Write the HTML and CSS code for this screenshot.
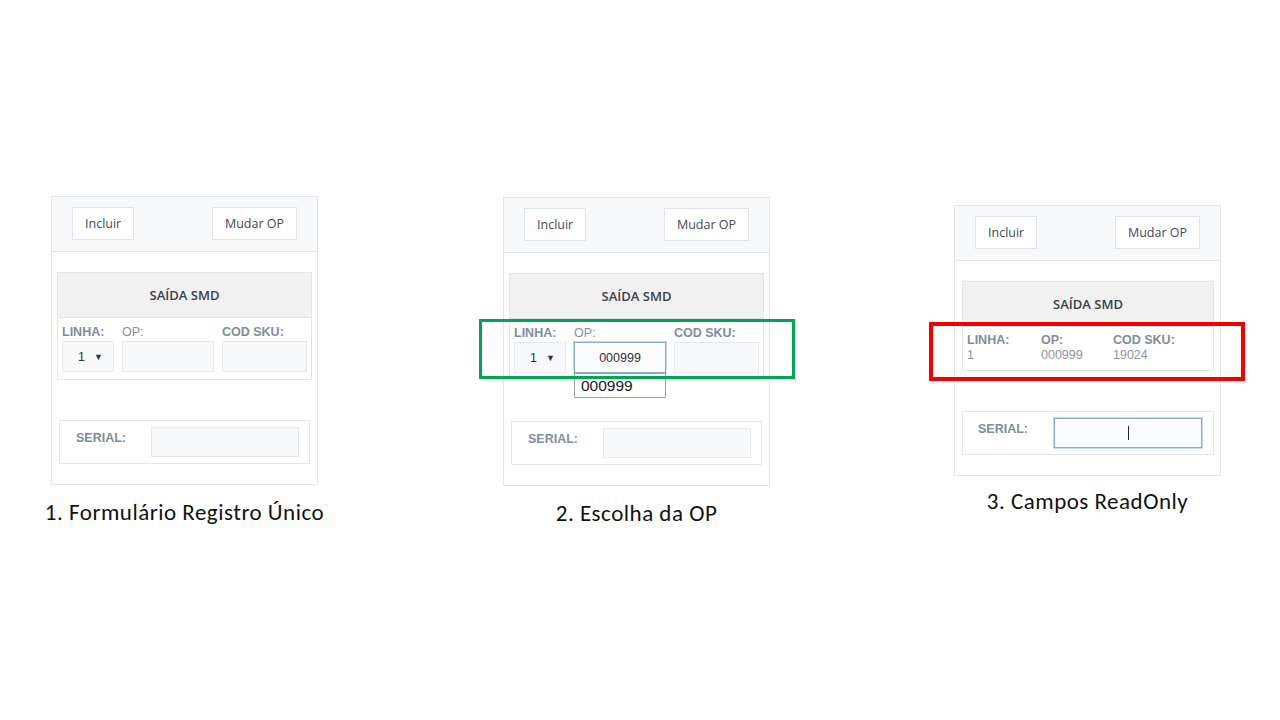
FILE: index.html
```html
<!DOCTYPE html>
<html lang="pt-BR">
<head>
<meta charset="utf-8">
<title>Registro Único</title>
<link rel="stylesheet" href="styles.css">
</head>
<body>
<div class="slide">

  <figure class="fig fig1">
    <div class="panel">
      <div class="toolbar"><button class="btn">Incluir</button><button class="btn">Mudar OP</button></div>
      <section class="card">
        <div class="card-title">SAÍDA SMD</div>
        <div class="fields">
          <div class="field"><span class="lbl">LINHA:</span><div class="select"><span>1</span><span class="caret">▼</span></div></div>
          <div class="field"><span class="lbl light">OP:</span><input class="inp" type="text"></div>
          <div class="field"><span class="lbl">COD SKU:</span><input class="inp" type="text"></div>
        </div>
      </section>
      <div class="serial"><span class="lbl serial-lbl">SERIAL:</span><input class="inp serial-inp" type="text"></div>
    </div>
    <figcaption class="caption">1. Formulário Registro Único</figcaption>
  </figure>

  <figure class="fig fig2">
    <div class="panel">
      <div class="toolbar"><button class="btn">Incluir</button><button class="btn">Mudar OP</button></div>
      <section class="card">
        <div class="card-title">SAÍDA SMD</div>
        <div class="fields">
          <div class="field"><span class="lbl">LINHA:</span><div class="select"><span>1</span><span class="caret">▼</span></div></div>
          <div class="field"><span class="lbl light">OP:</span><input class="inp inp-focus" type="text" value="000999">
            <div class="suggest">000999</div>
          </div>
          <div class="field"><span class="lbl">COD SKU:</span><input class="inp" type="text"></div>
        </div>
      </section>
      <div class="serial"><span class="lbl serial-lbl">SERIAL:</span><input class="inp serial-inp" type="text"></div>
    </div>
    <figcaption class="caption">2. Escolha da OP</figcaption>
  </figure>

  <figure class="fig fig3">
    <div class="panel">
      <div class="toolbar"><button class="btn">Incluir</button><button class="btn">Mudar OP</button></div>
      <section class="card card-ro">
        <div class="card-title">SAÍDA SMD</div>
        <div class="ro">
          <div><div class="lbl">LINHA:</div><div class="ro-val">1</div></div>
          <div><div class="lbl">OP:</div><div class="ro-val">000999</div></div>
          <div><div class="lbl">COD SKU:</div><div class="ro-val">19024</div></div>
        </div>
      </section>
      <div class="serial serial-ro"><span class="lbl serial-lbl">SERIAL:</span><div class="inp serial-inp inp-focus caret-box"><span class="cursor"></span></div></div>
    </div>
    <figcaption class="caption caption3">3. Campos ReadOnly</figcaption>
  </figure>

  <div class="mark mark-green"></div>
  <div class="mark mark-red"></div>
</div>
</body>
</html>
```

FILE: styles.css
```css
html, body {
  margin: 0;
  padding: 0;
  background: #ffffff;
}

.slide {
  position: relative;
  width: 1280px;
  height: 720px;
  overflow: hidden;
  background: #ffffff;
  font-family: "Open Sans", "Liberation Sans", sans-serif;
}

.fig {
  position: absolute;
  margin: 0;
  width: 267px;
  display: flex;
  flex-direction: column;
  align-items: center;
}

.fig1 { left: 51px; top: 196px; }
.fig2 { left: 503px; top: 197px; }
.fig3 { left: 954px; top: 205px; }

.panel {
  width: 267px;
  flex-shrink: 0;
  box-sizing: border-box;
  border: 1px solid #e1e5ea;
  background: #ffffff;
}

.toolbar {
  height: 44px;
  padding: 10px 20px 0;
  display: flex;
  justify-content: space-between;
  align-items: flex-start;
  background: #f7f9fb;
  border-bottom: 1px solid #e1e5ea;
}

.btn {
  height: 33px;
  padding: 0 12px;
  margin: 0;
  border: 1px solid #e1e5ea;
  border-radius: 0;
  background: #ffffff;
  font-family: "Open Sans", sans-serif;
  font-size: 12.5px;
  color: #444a52;
}

.card {
  margin: 20px 5px 0;
  border: 1px solid #e5e5e5;
}

.card-title {
  height: 44px;
  display: flex;
  align-items: center;
  justify-content: center;
  background: #f1f1f1;
  border-bottom: 1px solid #e5e5e5;
  font-family: "Open Sans", sans-serif;
  font-weight: 600;
  font-size: 13px;
  color: #3b4048;
}

.fields {
  display: grid;
  grid-template-columns: 52px 92px 85px;
  column-gap: 8px;
  padding: 6px 4px 7px;
}

.field {
  position: relative;
  display: flex;
  flex-direction: column;
  gap: 1px;
}

.lbl {
  font-family: "Liberation Sans", Arial, sans-serif;
  font-weight: bold;
  font-size: 12.5px;
  line-height: 16px;
  color: #808d9a;
  white-space: nowrap;
}

.lbl.light {
  font-weight: normal;
  color: #85919e;
}

.inp {
  display: block;
  box-sizing: border-box;
  width: 100%;
  height: 31px;
  margin: 0;
  padding: 0;
  border: 1px solid #e4e7eb;
  border-radius: 0;
  background: #f8f9fb;
  outline: none;
  font-family: "Liberation Sans", Arial, sans-serif;
  font-size: 12.5px;
  color: #333333;
  text-align: center;
}

.inp-focus {
  border-color: #86aad8;
  background: #fbfcfe;
  box-shadow: 0 0 0 1px rgba(134, 170, 216, 0.45);
}

.select {
  box-sizing: border-box;
  height: 31px;
  display: flex;
  align-items: center;
  justify-content: space-between;
  padding: 0 10px 0 15px;
  border: 1px solid #e4e7eb;
  background: #f8f9fb;
  font-family: "Liberation Sans", Arial, sans-serif;
  font-size: 12.5px;
  color: #333333;
}

.caret {
  font-size: 9px;
  color: #333333;
}

.suggest {
  position: absolute;
  left: 0;
  top: 100%;
  width: 92px;
  height: 25px;
  box-sizing: border-box;
  border: 1px solid #a3a3a3;
  background: #ffffff;
  padding-left: 6px;
  font-family: "Liberation Sans", Arial, sans-serif;
  font-size: 15.5px;
  line-height: 23px;
  color: #1a1a1a;
}

.serial {
  margin: 40px 7px 20px;
  border: 1px solid #e4e7eb;
  display: flex;
  align-items: flex-start;
  padding: 6px 10px 6px 16px;
}

.serial-lbl {
  margin-top: 3px;
}

.serial-inp {
  width: 148px;
  height: 30px;
  margin-left: auto;
}

.card-ro {
  margin: 20px 6px 0 7px;
}

.ro {
  display: grid;
  grid-template-columns: 74px 72px 1fr;
  padding: 6px 4px 7px;
}

.ro .lbl {
  line-height: 15px;
}

.ro-val {
  font-family: "Liberation Sans", Arial, sans-serif;
  font-size: 12.5px;
  line-height: 15px;
  color: #8c96a1;
}

.serial-ro {
  margin: 40px 6px 20px 7px;
  padding: 6px 11px 6px 15px;
}

.caret-box {
  display: flex;
  align-items: center;
  justify-content: center;
}

.cursor {
  width: 1px;
  height: 14px;
  background: #222222;
}

.caption {
  margin-top: 13px;
  font-family: "Carlito", "Lato", sans-serif;
  font-size: 23px;
  line-height: 28px;
  letter-spacing: 0.5px;
  color: #111111;
  white-space: nowrap;
}

.caption3 {
  margin-top: 11px;
}

.mark {
  position: absolute;
  box-sizing: border-box;
}

.mark-green {
  left: 479px;
  top: 319px;
  width: 316px;
  height: 60px;
  border: 3px solid #00a651;
}

.mark-red {
  left: 929px;
  top: 322px;
  width: 316px;
  height: 59px;
  border: 4px solid #f00000;
}
```
